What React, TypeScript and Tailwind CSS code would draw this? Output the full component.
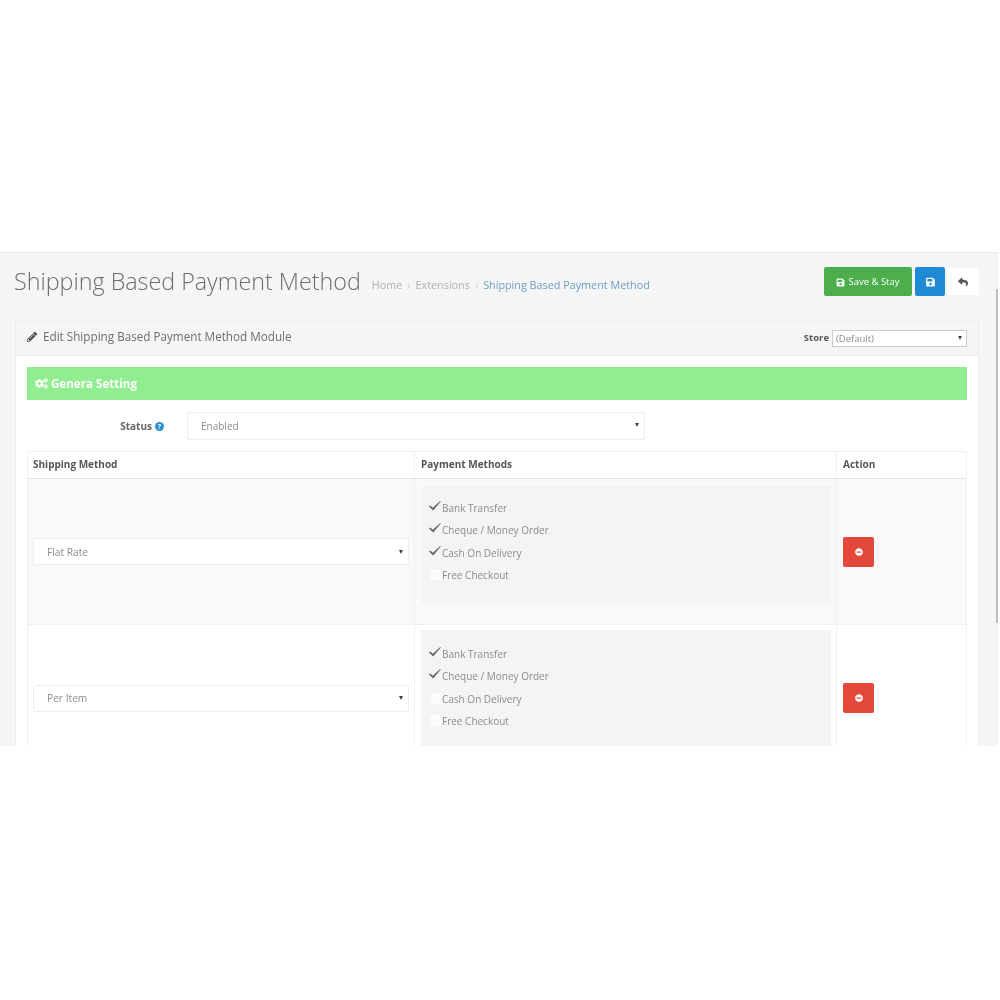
import { FaCogs, FaMinusCircle, FaPencilAlt, FaReply, FaSave } from 'react-icons/fa';

const font = 'font-["Open_Sans",sans-serif]';

type Row = {
    shipping: string;
    checked: string[];
    rowClass: string;
    boxClass: string;
};

const methods = ['Bank Transfer', 'Cheque / Money Order', 'Cash On Delivery', 'Free Checkout'];

const rows: Row[] = [
    {
        shipping: 'Flat Rate',
        checked: ['Bank Transfer', 'Cheque / Money Order', 'Cash On Delivery'],
        rowClass: 'bg-[#f9f9f9] border-b border-[#f1f1f1]',
        boxClass: 'mt-[7px] h-[117px] pt-[11px]',
    },
    {
        shipping: 'Per Item',
        checked: ['Bank Transfer', 'Cheque / Money Order'],
        rowClass: 'bg-white',
        boxClass: 'mt-[5px] h-[130px] pt-[13px]',
    },
];

function Caret() {
    return <span className="w-0 h-0 -mt-[2px] border-x-[2.5px] border-x-transparent border-t-[4px] border-t-[#444]" />;
}

function PaymentOption({ label, checked }: { label: string; checked: boolean }) {
    return (
        <div className="h-[22.5px] flex items-center">
            <span className="w-[12px] h-[12px] flex items-center justify-center -mt-[5px] shrink-0">
                {checked ? (
                    <svg className="w-[12px] h-[10px] text-[#666]" viewBox="0 0 12 10" fill="currentColor">
                        <polygon points="0,5.5 1.4,4.6 3.8,6.8 11.2,0 11.8,0.5 4.2,9.5" />
                    </svg>
                ) : (
                    <span className="w-[11px] h-[11px] mt-[3px] rounded-[2px] bg-[#fbfbfb]" />
                )}
            </span>
            <span className="text-[10px] text-[#8c8c8c] ml-px">{label}</span>
        </div>
    );
}

export default function App() {
    return (
        <div className={`min-h-[1000px] bg-white blur-[0.5px] ${font}`}>
            <div className="h-[252px]" />
            <div className="relative w-[998px] h-[494px] overflow-hidden bg-[#f5f5f5] border-t border-[#e8e8e8] pr-[19px] pl-[15px]">
                {/* Scrollbar thumb */}
                <div className="absolute right-0 top-[36px] w-[2px] h-[334px] bg-[#bdbdbd]" />

                {/* Page header */}
                <div className="h-[68px] flex items-start">
                    <h1 className="text-[23.3px] leading-[32px] mt-[12px] -ml-px font-light text-[#6e6e6e] whitespace-nowrap">
                        Shipping Based Payment Method
                    </h1>
                    <div className="flex items-center text-[10.8px] text-[#b0b0b0] ml-[11px] mt-[24px] whitespace-nowrap">
                        <span>Home</span>
                        <span className="mx-[5px] text-[#ccc]">›</span>
                        <span>Extensions</span>
                        <span className="mx-[5px] text-[#ccc]">›</span>
                        <span className="text-[#6a9fc4]">Shipping Based Payment Method</span>
                    </div>
                    <div className="ml-auto flex mt-[14px] items-start">
                        <button className="h-[29px] w-[88px] pt-[2px] rounded-[2px] bg-[#4cae4c] text-white text-[9.5px] flex items-center justify-center gap-[3px]">
                            <FaSave className="w-[9px] h-[9px]" />
                            Save &amp; Stay
                        </button>
                        <button className="h-[29px] w-[30px] ml-[3px] rounded-[2px] bg-[#1f8ad3] text-white flex items-center justify-center">
                            <FaSave className="w-[9px] h-[10px]" />
                        </button>
                        <button className="h-[27px] w-[32px] mt-px ml-[2px] bg-white text-[#555] flex items-center justify-center">
                            <FaReply className="w-[10px] h-[10px]" />
                        </button>
                    </div>
                </div>

                {/* Panel */}
                <div className="border border-[#ececec] bg-white h-[440px]">
                    <div className="h-[34px] bg-[#f5f5f5] border-b border-[#ececec] flex items-center pl-[11px] pr-[11px]">
                        <FaPencilAlt className="w-[10px] h-[10px] -mt-[3px] text-[#444]" />
                        <span className="ml-[6px] -mt-[4px] text-[11.7px] text-[#6e6e6e]">Edit Shipping Based Payment Method Module</span>
                        <span className="ml-auto text-[9.5px] font-bold text-[#555]">Store</span>
                        <div className="ml-[3px] w-[135px] h-[17px] pt-[1px] bg-white border border-[#ccc] flex items-center justify-between pl-[3px] pr-[4px] text-[9.5px] text-[#8c8c8c]">
                            <span>(Default)</span>
                            <Caret />
                        </div>
                    </div>
                    <div className="px-[11px] pt-[11px]">
                        <div className="h-[33px] bg-[#90ee90] flex items-center pl-[8px] text-white">
                            <FaCogs className="w-[13px] h-[13px]" />
                            <span className="ml-[3px] text-[11.6px] font-bold">Genera Setting</span>
                        </div>

                        <div className="mt-[12px] h-[28px] flex items-center">
                            <div className="w-[160px] flex items-center justify-end pr-[23px]">
                                <span className="text-[10px] font-bold text-[#666]">Status</span>
                                <span className="ml-[3px] w-[9px] h-[9px] rounded-full bg-[#2a8fc9] text-white text-[7px] leading-[9px] text-center font-bold">?</span>
                            </div>
                            <div className="w-[458px] h-[28px] bg-white border border-[#eeeeee] rounded-[2px] flex items-center justify-between pl-[13px] pr-[5px] text-[10px] text-[#8c8c8c]">
                                <span>Enabled</span>
                                <Caret />
                            </div>
                        </div>

                        <div className="mt-[11px] border border-[#f1f1f1]">
                            <div className="grid grid-cols-[386px_422px_1fr] h-[27px] pb-[2px] border-b border-[#e4e4e4] text-[10px] font-bold text-[#555]">
                                <div className="flex items-center pl-[5px]">Shipping Method</div>
                                <div className="flex items-center pl-[6px] border-l border-[#f1f1f1]">Payment Methods</div>
                                <div className="flex items-center pl-[6px] border-l border-[#f1f1f1]">Action</div>
                            </div>
                            {rows.map((row) => (
                                <div key={row.shipping} className={`grid grid-cols-[386px_422px_1fr] h-[146px] ${row.rowClass}`}>
                                    <div className="flex items-center pl-[5px] pr-[5px]">
                                        <div className="w-full h-[27px] pt-[2px] bg-white border border-[#eeeeee] rounded-[2px] flex items-center justify-between pl-[13px] pr-[5px] text-[10.2px] text-[#8c8c8c]">
                                            <span>{row.shipping}</span>
                                            <Caret />
                                        </div>
                                    </div>
                                    <div className="border-l border-[#f1f1f1] pl-[6px] pr-[5px]">
                                        <div className={`bg-[#f4f4f4] pl-[8px] ${row.boxClass}`}>
                                            {methods.map((m) => (
                                                <PaymentOption key={m} label={m} checked={row.checked.includes(m)} />
                                            ))}
                                        </div>
                                    </div>
                                    <div className="border-l border-[#f1f1f1] flex items-center pl-[6px]">
                                        <button className="w-[31px] h-[30px] rounded-[2px] bg-[#e4483a] text-white flex items-center justify-center">
                                            <FaMinusCircle className="w-[8px] h-[8px]" />
                                        </button>
                                    </div>
                                </div>
                            ))}
                        </div>
                    </div>
                </div>
            </div>
        </div>
    );
}
